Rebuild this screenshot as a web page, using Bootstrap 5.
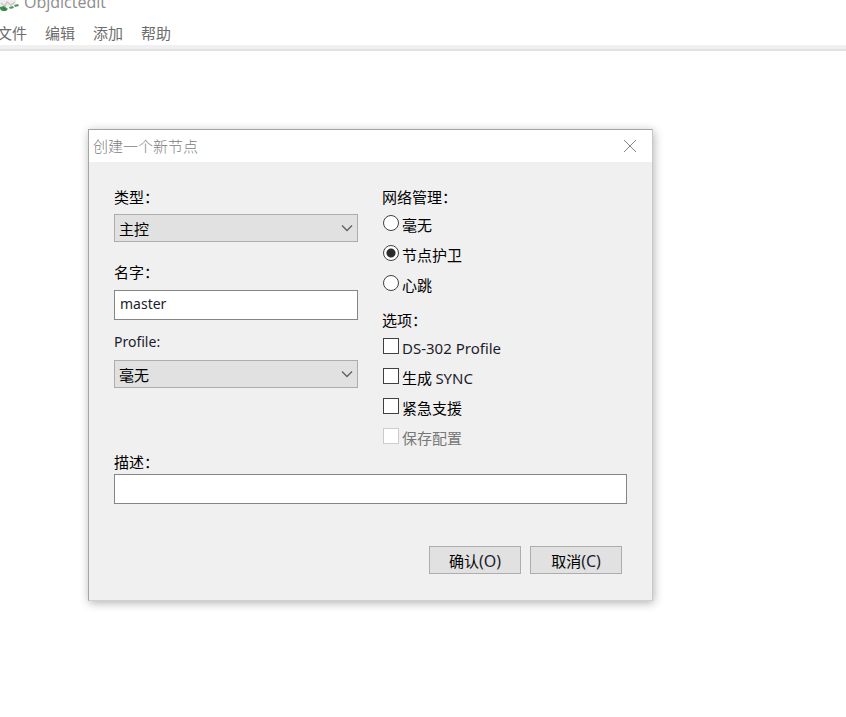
<!DOCTYPE html>
<html lang="zh-CN">
<head>
<meta charset="utf-8">
<meta name="viewport" content="width=device-width, initial-scale=1">
<title>Objdictedit</title>
<link href="https://cdn.jsdelivr.net/npm/bootstrap@5.3.0/dist/css/bootstrap.min.css" rel="stylesheet">
<style>
  body { font: 15px/20px "Noto Sans", "Noto Sans CJK SC", sans-serif; color: #000; background: #fff; }
  .cjk { font-family: "Noto Sans CJK SC", sans-serif; }
  .latin { font-family: "Noto Sans", sans-serif; font-size: 14px; color: #1c1c2c; }
  .app-title { height: 20px; color: #8c8c8c; font-family: "Open Sans", sans-serif; font-size: 16px; }
  .app-title span { margin-top: -8px; }
  .app-title svg { margin-top: -6px; }
  .menu-row { height: 25px; gap: 18px; margin-left: -3px; padding-top: 3px; }
  .menu-row a { color: #6d6d6d; line-height: 20px; }
  .menu-edge { height: 6px; background: #f0f0f0; border-bottom: 2px solid #e2e2e2; }
  .desktop { padding: 78px 24px 40px 88px; }
  .dialog-window { max-width: 565px; background: #f0f0f0; border: 1px solid #a5a5a5; border-right-color: #c8c8c8; border-bottom-color: #d0d0d0; box-shadow: 1px 2px 9px rgba(0,0,0,.3); }
  .dialog-title { height: 32px; padding: 0 14px 0 4px; background: #fff; color: #808080; }
  .dialog-title h1 { font-size: 15px; line-height: 20px; font-weight: 300; padding-bottom: 1px; }
  .close-x { width: 16px; height: 16px; color: #858585; }
  .dialog-content { padding: 25px 25px 26px; }
  .split { display: grid; grid-template-columns: 244px 1fr; column-gap: 24px; }
  .caption { display: block; line-height: 20px; }
  .field-a { margin: 7px 0 20px; }
  .field-b { margin: 8px 0 12px; }
  .field-c { margin: 8px 0 0; }
  .form-select, .form-control, .form-check-input, .push { border-radius: 0; box-shadow: none; }
  .form-select { height: 28px; padding: 1px 24px 0 4px; font-size: 15px; line-height: 20px; color: #000; background-color: #e1e1e1; border-color: #adadad; background-size: 12px 8px; background-position: right 4px center;
    background-image: url("data:image/svg+xml,%3Csvg xmlns='http://www.w3.org/2000/svg' viewBox='0 0 12 8'%3E%3Cpath d='M1 1.5 6 6.5 11 1.5' fill='none' stroke='%23606060' stroke-width='1.3'/%3E%3C/svg%3E"); }
  .form-control { height: 30px; padding: 0 5px 4px; border-color: #858585; color: #1c1c2c; font-size: 14px; }
  .choice { height: 30px; gap: 3px; padding-left: 1px; }
  .choice label { line-height: 20px; padding-top: 3px; }
  .choice .latin { font-size: 15px; }
  .choice .form-check-input { width: 16px; height: 16px; margin: 0; border: 1px solid #404040; background-color: #fff; flex: none; }
  .choice .form-check-input[type=checkbox] { border-radius: 0; }
  .choice .form-check-input[type=radio] { border-radius: 50%; }
  .choice .form-check-input[type=radio]:checked { background-image: radial-gradient(circle, #2b2b2b 4px, #fff 5px); background-size: 14px 14px; }
  .choice .form-check-input:disabled { border-color: #ccc; opacity: 1; }
  .choice .form-check-input:disabled ~ label { opacity: 1; color: #777; }
  .radio-set { margin-top: 1px; margin-bottom: 12px; }
  .option-set { margin-top: 1px; margin-bottom: 1px; }
  .description { margin-top: 2px; }
  .actions { margin-top: 42px; gap: 9px; padding-right: 5px; }
  .push { width: 92px; height: 28px; padding: 1px 0 0; font-size: 15px; line-height: 20px; background: #e1e1e1; border: 1px solid #adadad; color: #000; }
  .push .latin { font-size: 16px; }
</style>
</head>
<body>
<header>
  <div class="app-title d-flex align-items-start">
    <svg width="20" height="18" viewBox="0 0 20 18" aria-hidden="true">
      <path d="M0 5h17l-2 6-6 2-9 1z" fill="#ededeb"/>
      <path d="M1 9l4 3 2-4 4 3 4-3" fill="none" stroke="#d2c6cc" stroke-width="1.5"/>
      <path d="M0 13l4-1 4 3-2 2-4 0-2-2z" fill="#3f9150"/>
      <path d="M9 13l4-1 1 2-4 1zM14 11l4-1 1 2-4 1z" fill="#4b9a58"/>
      <path d="M3 14l3 2" stroke="#237638"/>
    </svg>
    <span class="ms-1">Objdictedit</span>
  </div>
  <nav class="menu-row d-flex cjk" aria-label="菜单">
    <a class="text-decoration-none" href="#">文件</a>
    <a class="text-decoration-none" href="#">编辑</a>
    <a class="text-decoration-none" href="#">添加</a>
    <a class="text-decoration-none" href="#">帮助</a>
  </nav>
  <div class="menu-edge"></div>
</header>

<main class="desktop">
<section class="dialog-window" role="dialog" aria-labelledby="dialogTitle">
  <div class="dialog-title d-flex align-items-center justify-content-between">
    <h1 id="dialogTitle" class="cjk m-0">创建一个新节点</h1>
    <button type="button" class="close-x border-0 bg-transparent p-0 d-flex align-items-center justify-content-center" aria-label="关闭">
      <svg width="14" height="14" viewBox="0 0 14 14" aria-hidden="true"><path d="M1 1l12 12M13 1 1 13" stroke="currentColor" fill="none"/></svg>
    </button>
  </div>
  <form class="dialog-content">
    <div class="split">
      <div>
        <label class="caption cjk" for="nodeType">类型：</label>
        <select id="nodeType" class="form-select field-a cjk"><option>主控</option><option>从属</option></select>
        <label class="caption cjk" for="nodeName">名字：</label>
        <input id="nodeName" type="text" class="form-control field-b latin" value="master">
        <label class="caption latin" for="profile">Profile:</label>
        <select id="profile" class="form-select field-c cjk"><option>毫无</option></select>
      </div>
      <div class="cjk">
        <div class="caption" id="netLabel">网络管理：</div>
        <div class="radio-set" role="radiogroup" aria-labelledby="netLabel">
          <div class="choice d-flex align-items-center"><input class="form-check-input" type="radio" name="net" id="netNone"><label for="netNone">毫无</label></div>
          <div class="choice d-flex align-items-center"><input class="form-check-input" type="radio" name="net" id="netGuard" checked><label for="netGuard">节点护卫</label></div>
          <div class="choice d-flex align-items-center"><input class="form-check-input" type="radio" name="net" id="netBeat"><label for="netBeat">心跳</label></div>
        </div>
        <div class="caption" id="optLabel">选项：</div>
        <div class="option-set" role="group" aria-labelledby="optLabel">
          <div class="choice d-flex align-items-center"><input class="form-check-input" type="checkbox" id="optDs"><label class="latin" for="optDs">DS-302 Profile</label></div>
          <div class="choice d-flex align-items-center"><input class="form-check-input" type="checkbox" id="optSync"><label for="optSync">生成 <span class="latin">SYNC</span></label></div>
          <div class="choice d-flex align-items-center"><input class="form-check-input" type="checkbox" id="optEmcy"><label for="optEmcy">紧急支援</label></div>
          <div class="choice d-flex align-items-center"><input class="form-check-input" type="checkbox" id="optSave" disabled><label for="optSave">保存配置</label></div>
        </div>
      </div>
    </div>
    <label class="caption cjk" for="description">描述：</label>
    <input id="description" type="text" class="form-control description latin">
    <div class="actions d-flex justify-content-end cjk">
      <button type="button" class="push">确认<span class="latin">(O)</span></button>
      <button type="button" class="push">取消<span class="latin">(C)</span></button>
    </div>
  </form>
</section>
</main>
<script src="https://cdn.jsdelivr.net/npm/bootstrap@5.3.0/dist/js/bootstrap.bundle.min.js"></script>
</body>
</html>
